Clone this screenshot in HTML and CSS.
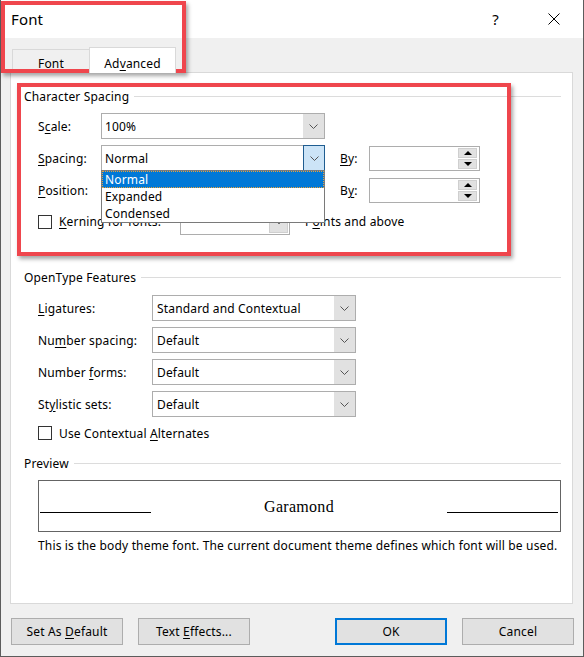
FILE: index.html
```html
<!DOCTYPE html>
<html lang="en">
<head>
    <meta charset="UTF-8">
    <title>Font</title>
    <link rel="stylesheet" href="styles.css">
</head>
<body>
    <div class="window">
        <div class="titlebar">
            <span class="title">Font</span>
            <span class="help">?</span>
            <svg class="close" width="12" height="12" viewBox="0 0 12 12"><path d="M0.5 0.5 L11.5 11.5 M11.5 0.5 L0.5 11.5" stroke="#000" stroke-width="1" fill="none"/></svg>
        </div>

        <div class="client">
            <div class="tabs">
                <div class="tab">Fo<u>n</u>t</div>
                <div class="tab active">Ad<u>v</u>anced</div>
            </div>

            <div class="panel">
                <div class="group-head"><span>Character Spacing</span><i></i></div>
                <div class="rows spacing">
                    <div class="row">
                        <span class="lbl">S<u>c</u>ale:</span>
                        <div class="combo w224">
                            <span class="val">100%</span>
                            <span class="drop"><svg width="9" height="5" viewBox="0 0 9 5"><path d="M0.5 0.5 L4.5 4.5 L8.5 0.5" stroke="#555" fill="none"/></svg></span>
                        </div>
                    </div>
                    <div class="row">
                        <span class="lbl"><u>S</u>pacing:</span>
                        <div class="combo w224">
                            <span class="val">Normal</span>
                            <span class="drop focus"><svg width="9" height="5" viewBox="0 0 9 5"><path d="M0.5 0.5 L4.5 4.5 L8.5 0.5" stroke="#555" fill="none"/></svg></span>
                            <ul class="list">
                                <li class="sel">Normal</li>
                                <li>Expanded</li>
                                <li>Condensed</li>
                            </ul>
                        </div>
                        <span class="by"><u>B</u>y:</span>
                        <div class="spin">
                            <div class="spin-btns"><b><i class="up"></i></b><b><i class="down"></i></b></div>
                        </div>
                    </div>
                    <div class="row">
                        <span class="lbl"><u>P</u>osition:</span>
                        <div class="combo w224">
                            <span class="val"></span>
                            <span class="drop"></span>
                        </div>
                        <span class="by">B<u>y</u>:</span>
                        <div class="spin">
                            <div class="spin-btns"><b><i class="up"></i></b><b><i class="down"></i></b></div>
                        </div>
                    </div>
                    <div class="row kern-row">
                        <span class="check"></span>
                        <span class="kern-lbl"><u>K</u>erning for fonts:</span>
                        <div class="combo small">
                            <span class="val"></span>
                            <span class="drop solid"><i class="down"></i></span>
                        </div>
                        <span class="after">P<u>o</u>ints and above</span>
                    </div>
                </div>

                <div class="group-head second"><span>OpenType Features</span><i></i></div>
                <div class="rows features">
                    <div class="row">
                        <span class="lbl"><u>L</u>igatures:</span>
                        <div class="combo w204">
                            <span class="val">Standard and Contextual</span>
                            <span class="drop"><svg width="9" height="5" viewBox="0 0 9 5"><path d="M0.5 0.5 L4.5 4.5 L8.5 0.5" stroke="#555" fill="none"/></svg></span>
                        </div>
                    </div>
                    <div class="row">
                        <span class="lbl">Nu<u>m</u>ber spacing:</span>
                        <div class="combo w204">
                            <span class="val">Default</span>
                            <span class="drop"><svg width="9" height="5" viewBox="0 0 9 5"><path d="M0.5 0.5 L4.5 4.5 L8.5 0.5" stroke="#555" fill="none"/></svg></span>
                        </div>
                    </div>
                    <div class="row">
                        <span class="lbl">Number <u>f</u>orms:</span>
                        <div class="combo w204">
                            <span class="val">Default</span>
                            <span class="drop"><svg width="9" height="5" viewBox="0 0 9 5"><path d="M0.5 0.5 L4.5 4.5 L8.5 0.5" stroke="#555" fill="none"/></svg></span>
                        </div>
                    </div>
                    <div class="row">
                        <span class="lbl">St<u>y</u>listic sets:</span>
                        <div class="combo w204">
                            <span class="val">Default</span>
                            <span class="drop"><svg width="9" height="5" viewBox="0 0 9 5"><path d="M0.5 0.5 L4.5 4.5 L8.5 0.5" stroke="#555" fill="none"/></svg></span>
                        </div>
                    </div>
                    <div class="row check-row">
                        <span class="check"></span>
                        <span class="check-lbl">Use Contextual <u>A</u>lternates</span>
                    </div>
                </div>

                <div class="group-head third"><span>Preview</span><i></i></div>
                <div class="preview">
                    <div class="rule"></div>
                    <div class="sample">Garamond</div>
                    <div class="rule"></div>
                </div>
                <p class="caption">This is the body theme font. The current document theme defines which font will be used.</p>
            </div>

            <div class="buttons">
                <button>Set As <u>D</u>efault</button>
                <button>Text <u>E</u>ffects...</button>
                <button class="ok">OK</button>
                <button>Cancel</button>
            </div>
        </div>
    </div>

    <div class="mark mark-tabs"></div>
    <div class="mark mark-spacing"></div>
</body>
</html>
```

FILE: styles.css
```css
body {
    margin: 0;
    font-family: "Noto Sans", sans-serif;
    font-size: 12px;
    line-height: 16px;
    letter-spacing: 0.16px;
    color: #000;
    position: relative;
}
u {
    text-underline-offset: 2px;
}
.window {
    width: 584px;
    height: 657px;
    box-sizing: border-box;
    border: 1px solid #5c5c5c;
    border-top: 0;
    background: #f0f0f0;
}
.titlebar {
    height: 38px;
    background: #fff;
    display: flex;
    align-items: center;
}
.title {
    flex: 1;
    font-size: 15px;
    margin-left: 10px;
}
.help {
    font-size: 15px;
    margin-right: 49px;
}
.close {
    margin-right: 23px;
}
.client {
    padding: 9px 10px 0 9px;
}
.tabs {
    display: flex;
    align-items: flex-end;
    height: 25px;
    padding-left: 2px;
}
.tab {
    width: 77px;
    height: 23px;
    box-sizing: border-box;
    border: 1px solid #d9d9d9;
    border-right: 0;
    border-bottom: 0;
    text-align: center;
    padding-top: 6px;
}
.tab.active {
    width: 87px;
    height: 26px;
    padding-top: 8px;
    background: #fff;
    border-right: 1px solid #d9d9d9;
    margin-bottom: -1px;
    position: relative;
    z-index: 1;
}
.panel {
    height: 532px;
    box-sizing: border-box;
    border: 1px solid #d9d9d9;
    background: #fff;
}
.group-head {
    display: flex;
    align-items: center;
    margin: 16px 11px 0 13px;
}
.group-head i {
    flex: 1;
    height: 1px;
    margin: -2px 0 0 5px;
    background: #dcdcdc;
}
.group-head.second {
    margin-top: 35px;
}
.group-head.third {
    margin-top: 15px;
}
.rows {
    display: flex;
    flex-direction: column;
    gap: 6px;
    margin-top: 8px;
    padding-left: 27px;
}
.features {
    margin-top: 9px;
}
.row {
    display: flex;
    align-items: center;
    height: 26px;
}
.lbl, .by, .kern-lbl, .after, .check-lbl, .combo .val {
    padding-top: 2px;
}
.kern-row .kern-lbl, .kern-row .after {
    padding-top: 0;
}
.lbl {
    width: 63px;
}
.features .lbl {
    width: 114px;
}
.combo {
    position: relative;
    display: flex;
    align-items: center;
    height: 26px;
    box-sizing: border-box;
    border: 1px solid #adadad;
    background: #fff;
}
.w224 {
    width: 224px;
}
.w204 {
    width: 204px;
}
.combo .val {
    flex: 1;
    padding-left: 3px;
}
.features .combo .val {
    padding-left: 4px;
}
.drop {
    width: 21px;
    height: 24px;
    background: #e1e1e1;
    display: flex;
    align-items: center;
    justify-content: center;
}
.drop.focus {
    width: 22px;
    height: 26px;
    box-sizing: border-box;
    margin: -1px -1px -1px 0;
    background: #cce4f7;
    border: 1px solid #1f5d91;
}
.list {
    position: absolute;
    left: -1px;
    top: 24px;
    width: 224px;
    margin: 0;
    padding: 0;
    list-style: none;
    box-sizing: border-box;
    border: 1px solid #7a7a7a;
    background: #fff;
    z-index: 2;
}
.list li {
    line-height: 17px;
    padding-left: 3px;
}
.list .sel {
    background: #0078d7;
    color: #fff;
    outline: 1px dotted #e9a23b;
    outline-offset: -1px;
}
.by {
    width: 29px;
    margin-left: 15px;
}
.spin {
    width: 111px;
    height: 25px;
    box-sizing: border-box;
    border: 1px solid #adadad;
    display: flex;
    justify-content: flex-end;
    padding: 1px 2px 1px 0;
}
.spin-btns {
    width: 19px;
    display: flex;
    flex-direction: column;
    gap: 1px;
}
.spin-btns b {
    flex: 1;
    background: #e1e1e1;
    border: 1px solid #cfcfcf;
    display: flex;
    align-items: center;
    justify-content: center;
}
.up {
    border-left: 4px solid transparent;
    border-right: 4px solid transparent;
    border-bottom: 4px solid #000;
}
.down {
    border-left: 4px solid transparent;
    border-right: 4px solid transparent;
    border-top: 4px solid #000;
}
.check {
    width: 14px;
    height: 14px;
    box-sizing: border-box;
    border: 1px solid #333;
    background: #fff;
}
.kern-lbl {
    width: 121px;
    margin-left: 7px;
}
.combo.small {
    width: 110px;
    height: 25px;
}
.drop.solid {
    width: 19px;
    height: 21px;
    margin-right: 1px;
    border: 1px solid #cfcfcf;
    box-sizing: border-box;
}
.after {
    margin-left: 15px;
}
.check-row {
    height: 16px;
    margin-top: 2px;
}
.check-lbl {
    margin-left: 7px;
}
.preview {
    display: grid;
    grid-template-columns: 111px 1fr 111px;
    align-items: start;
    width: 523px;
    height: 52px;
    box-sizing: border-box;
    margin: 8px 0 0 27px;
    padding: 0 2px 0 1px;
    border: 1px solid #646464;
}
.rule {
    height: 1px;
    margin-top: 31px;
    background: #000;
}
.sample {
    margin-top: 16px;
    text-align: center;
    font-family: "Liberation Serif", serif;
    font-size: 16px;
    line-height: 20px;
    letter-spacing: 0.3px;
}
.caption {
    margin: 6px 0 0 27px;
}
.buttons {
    display: flex;
    gap: 15px;
    margin: 14px -1px 0 1px;
}
button {
    width: 112px;
    height: 27px;
    padding: 0;
    font-family: inherit;
    font-size: 12px;
    letter-spacing: 0.16px;
    color: #000;
    background: #e1e1e1;
    border: 1px solid #adadad;
}
button.ok {
    margin-left: auto;
    border: 2px solid #0078d7;
}
.mark {
    position: absolute;
    box-sizing: border-box;
    border: 4px solid #ef464d;
    box-shadow: 2px 3px 4px rgba(0, 0, 0, 0.35);
}
.mark-tabs {
    left: 1px;
    top: 1px;
    width: 185px;
    height: 72px;
}
.mark-spacing {
    left: 17px;
    top: 83px;
    width: 494px;
    height: 173px;
}
```
